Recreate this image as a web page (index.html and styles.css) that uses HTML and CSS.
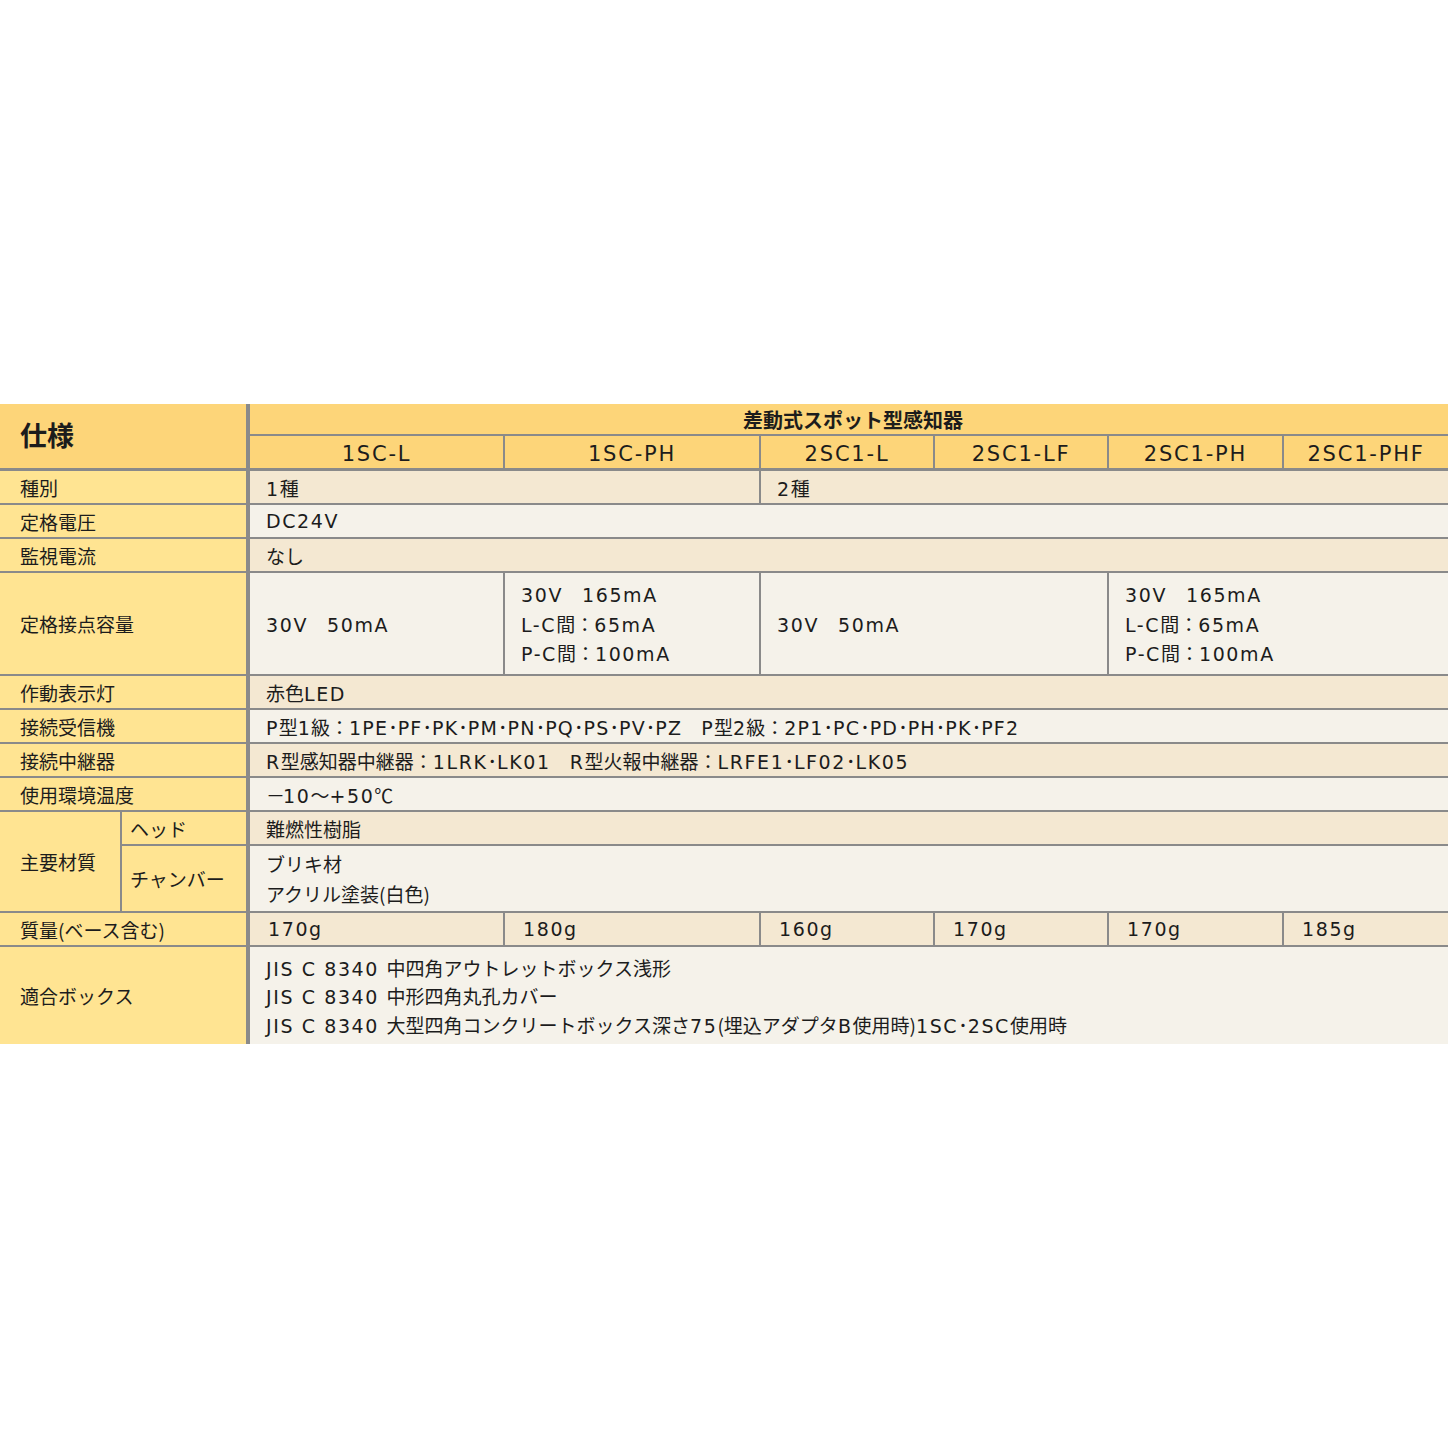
FILE: index.html
```html
<!DOCTYPE html>
<html lang="ja">
<head>
<meta charset="utf-8">
<title>仕様</title>
<link rel="stylesheet" href="styles.css">
</head>
<body>
<div class="page">
  <div class="spec">
    <div class="cell hd title span-label span-r2">仕様</div>
    <div class="cell hd group span-data">差動式スポット型感知器</div>
    <div class="cell hd model"><span class="en">1SC-L</span></div>
    <div class="cell hd model"><span class="en">1SC-PH</span></div>
    <div class="cell hd model"><span class="en">2SC1-L</span></div>
    <div class="cell hd model"><span class="en">2SC1-LF</span></div>
    <div class="cell hd model"><span class="en">2SC1-PH</span></div>
    <div class="cell hd model"><span class="en">2SC1-PHF</span></div>

    <div class="cell lb span-label">種別</div>
    <div class="cell dt odd span-2"><span><span class="en">1</span>種</span></div>
    <div class="cell dt odd span-4"><span><span class="en">2</span>種</span></div>

    <div class="cell lb span-label">定格電圧</div>
    <div class="cell dt even span-data"><span class="en">DC24V</span></div>

    <div class="cell lb span-label">監視電流</div>
    <div class="cell dt odd span-data">なし</div>

    <div class="cell lb span-label">定格接点容量</div>
    <div class="cell dt even"><span><span class="en">30V</span>　<span class="en">50mA</span></span></div>
    <div class="cell dt even lines"><span><span class="en">30V</span>　<span class="en">165mA</span></span><span><span class="en">L-C</span>間：<span class="en">65mA</span></span><span><span class="en">P-C</span>間：<span class="en">100mA</span></span></div>
    <div class="cell dt even span-2"><span><span class="en">30V</span>　<span class="en">50mA</span></span></div>
    <div class="cell dt even span-2 lines"><span><span class="en">30V</span>　<span class="en">165mA</span></span><span><span class="en">L-C</span>間：<span class="en">65mA</span></span><span><span class="en">P-C</span>間：<span class="en">100mA</span></span></div>

    <div class="cell lb span-label">作動表示灯</div>
    <div class="cell dt odd span-data"><span>赤色<span class="en">LED</span></span></div>

    <div class="cell lb span-label">接続受信機</div>
    <div class="cell dt even span-data tight"><span><span class="en">P</span>型<span class="en">1</span>級：<span class="en">1PE</span>･<span class="en">PF</span>･<span class="en">PK</span>･<span class="en">PM</span>･<span class="en">PN</span>･<span class="en">PQ</span>･<span class="en">PS</span>･<span class="en">PV</span>･<span class="en">PZ</span>　<span class="en">P</span>型<span class="en">2</span>級：<span class="en">2P1</span>･<span class="en">PC</span>･<span class="en">PD</span>･<span class="en">PH</span>･<span class="en">PK</span>･<span class="en">PF2</span></span></div>

    <div class="cell lb span-label">接続中継器</div>
    <div class="cell dt odd span-data"><span><span class="en">R</span>型感知器中継器：<span class="en">1LRK</span>･<span class="en">LK01</span>　<span class="en">R</span>型火報中継器：<span class="en">LRFE1</span>･<span class="en">LF02</span>･<span class="en">LK05</span></span></div>

    <div class="cell lb span-label">使用環境温度</div>
    <div class="cell dt even span-data"><span><span class="dash">－</span><span class="en">10</span>～<span class="en">+50</span>℃</span></div>

    <div class="cell lb main">主要材質</div>
    <div class="cell lb sub">ヘッド</div>
    <div class="cell dt odd span-data">難燃性樹脂</div>
    <div class="cell lb sub">チャンバー</div>
    <div class="cell dt even span-data lines"><span>ブリキ材</span><span>アクリル塗装(白色)</span></div>

    <div class="cell lb span-label">質量(ベース含む)</div>
    <div class="cell dt odd wt"><span class="en">170g</span></div>
    <div class="cell dt odd wt"><span class="en">180g</span></div>
    <div class="cell dt odd wt"><span class="en">160g</span></div>
    <div class="cell dt odd wt"><span class="en">170g</span></div>
    <div class="cell dt odd wt"><span class="en">170g</span></div>
    <div class="cell dt odd wt"><span class="en">185g</span></div>

    <div class="cell lb span-label">適合ボックス</div>
    <div class="cell dt even span-data lines box"><span><span class="en">JIS C 8340 </span>中四角アウトレットボックス浅形</span><span><span class="en">JIS C 8340 </span>中形四角丸孔カバー</span><span><span class="en">JIS C 8340 </span>大型四角コンクリートボックス深さ<span class="en">75</span>(埋込アダプタ<span class="en">B</span>使用時)<span class="en">1SC</span>･<span class="en">2SC</span>使用時</span></div>
  </div>
</div>
</body>
</html>
```

FILE: styles.css
```css
html, body {
  margin: 0;
  padding: 0;
  background: #ffffff;
}

body {
  font-family: "Noto Sans CJK JP", "Noto Sans", sans-serif;
  color: #1c1c1c;
}

.page {
  width: 1448px;
  height: 1448px;
  padding-top: 404px;
  box-sizing: border-box;
}

.spec {
  display: grid;
  grid-template-columns: 120px 126px 253px 254px 172px 172px 173px 164px;
  grid-template-rows: 30px 33px 32px 32px 32px 101px 32px 32px 32px 32px 32px 65px 32px 97px;
  gap: 2px;
  background: #8a8a8a;
}

.cell {
  display: flex;
  flex-direction: column;
  justify-content: center;
  box-sizing: border-box;
  font-size: 19px;
  line-height: 29px;
  white-space: nowrap;
  overflow: hidden;
}

.en {
  font-family: "DejaVu Sans", "Noto Sans CJK JP", sans-serif;
  letter-spacing: 1.6px;
  line-height: 1;
}

.tight .en {
  letter-spacing: 1.2px;
}

.dash {
  letter-spacing: -2px;
}

.hd {
  background: #fdd579;
}

.title {
  font-size: 27px;
  font-weight: 700;
  padding-left: 20px;
  padding-bottom: 4px;
  border-right: 2px solid #8a8a8a;
  border-bottom: 1px solid #8a8a8a;
}

.group {
  font-size: 20px;
  font-weight: 700;
  align-items: center;
  padding-left: 8px;
}

.model {
  font-size: 21px;
  align-items: center;
  padding-top: 4px;
  border-bottom: 1px solid #8a8a8a;
}

.model .en {
  letter-spacing: 1.8px;
}

.lb {
  background: #ffe492;
  padding-left: 20px;
}

.span-label {
  grid-column: 1 / span 2;
  border-right: 2px solid #8a8a8a;
}

.span-r2 {
  grid-row: 1 / span 2;
}

.main {
  grid-column: 1;
  grid-row: 11 / span 2;
}

.sub {
  grid-column: 2;
  padding-left: 8px;
  border-right: 2px solid #8a8a8a;
}

.dt {
  padding-left: 16px;
}

.odd {
  background: #f4e8d2;
}

.even {
  background: #f5f2ea;
}

.span-data {
  grid-column: 3 / span 6;
}

.span-2 {
  grid-column: span 2;
}

.span-4 {
  grid-column: span 4;
}

.wt {
  padding-left: 18px;
}

.lines {
  line-height: 29.5px;
}

.box {
  line-height: 28.5px;
  padding-top: 2px;
}
```
